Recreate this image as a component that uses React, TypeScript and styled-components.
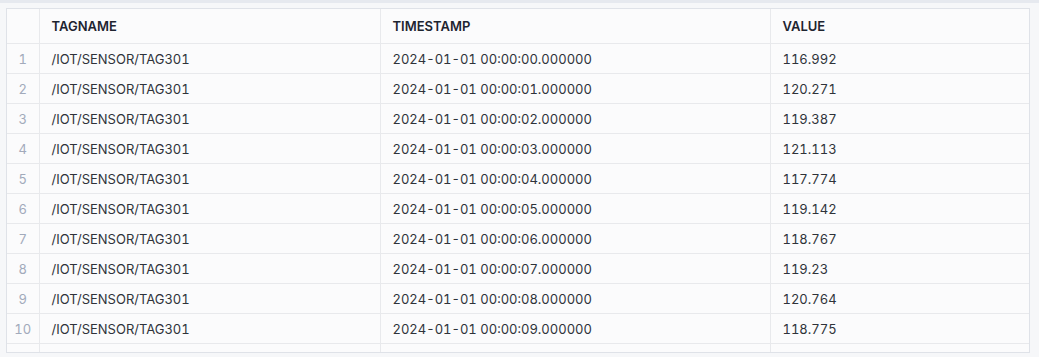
import React from 'react';
import styled, { createGlobalStyle } from 'styled-components';

const GlobalStyle = createGlobalStyle`
  html, body {
    margin: 0;
    padding: 0;
    background: #f6f7f9;
    font-family: Inter, "Noto Sans", sans-serif;
  }
`;

const Page = styled.div`
  height: 357px;
  box-sizing: border-box;
  border-top: 3px solid #e6e9ef;
  padding: 5px 9px 0 6px;
  overflow: hidden;
`;

const Frame = styled.div`
  height: 345px;
  box-sizing: border-box;
  border: 1px solid #dfe2e8;
  background: #fbfbfc;
  overflow: hidden;
`;

const Table = styled.table`
  width: 100%;
  border-collapse: collapse;
  table-layout: fixed;
`;

const HeadCell = styled.th`
  height: 34px;
  padding: 0 12px;
  text-align: left;
  font-size: 13px;
  font-weight: 600;
  color: #1e2430;
  border-right: 1px solid #e8e9ec;
  border-bottom: 1px solid #e8e9ec;
  &:last-child {
    border-right: none;
  }
`;

const Cell = styled.td`
  height: 29px;
  padding: 0 12px;
  font-size: 13px;
  font-variant-numeric: tabular-nums;
  color: #2f333a;
  border-right: 1px solid #e8e9ec;
  border-bottom: 1px solid #e8e9ec;
  white-space: nowrap;
  overflow: hidden;
  &:last-child {
    border-right: none;
  }
`;

const IndexCell = styled(Cell)`
  padding: 0;
  text-align: center;
  color: #a2aabb;
`;

const rows = [
  ['00', '116.992'],
  ['01', '120.271'],
  ['02', '119.387'],
  ['03', '121.113'],
  ['04', '117.774'],
  ['05', '119.142'],
  ['06', '118.767'],
  ['07', '119.23'],
  ['08', '120.764'],
  ['09', '118.775'],
];

export default function App() {
  return (
    <>
      <GlobalStyle />
      <Page>
        <Frame>
          <Table>
            <colgroup>
              <col style={{ width: 32 }} />
              <col style={{ width: 341 }} />
              <col style={{ width: 390 }} />
              <col />
            </colgroup>
            <thead>
              <tr>
                <HeadCell />
                <HeadCell>TAGNAME</HeadCell>
                <HeadCell>TIMESTAMP</HeadCell>
                <HeadCell>VALUE</HeadCell>
              </tr>
            </thead>
            <tbody>
              {rows.map(([sec, value], i) => (
                <tr key={i}>
                  <IndexCell>{i + 1}</IndexCell>
                  <Cell>/IOT/SENSOR/TAG301</Cell>
                  <Cell>2024-01-01 00:00:{sec}.000000</Cell>
                  <Cell>{value}</Cell>
                </tr>
              ))}
              <tr>
                <IndexCell />
                <Cell />
                <Cell />
                <Cell />
              </tr>
            </tbody>
          </Table>
        </Frame>
      </Page>
    </>
  );
}
